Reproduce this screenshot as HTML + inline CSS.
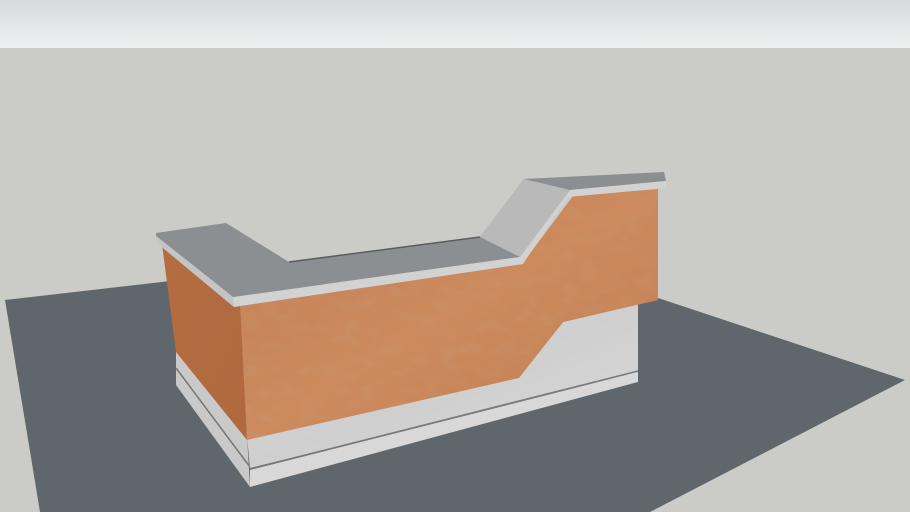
<!DOCTYPE html>
<html><head><meta charset="utf-8"><style>
html,body{margin:0;padding:0;width:910px;height:512px;overflow:hidden;background:#cbcbc8}
svg{display:block}
</style></head><body>
<svg width="910" height="512" viewBox="0 0 910 512" xmlns="http://www.w3.org/2000/svg">
<defs>
<linearGradient id="sky" x1="0" y1="0" x2="0" y2="1">
<stop offset="0" stop-color="#d6dadd"/><stop offset="1" stop-color="#eff0f0"/></linearGradient>
<linearGradient id="wood" x1="0" y1="0" x2="1" y2="1">
<stop offset="0" stop-color="#c27e53"/><stop offset="0.5" stop-color="#cc8a5d"/><stop offset="1" stop-color="#c27d51"/></linearGradient>
<linearGradient id="woodside" x1="0" y1="0" x2="1" y2="1">
<stop offset="0" stop-color="#b46c41"/><stop offset="1" stop-color="#b0693e"/></linearGradient>
<linearGradient id="conc" x1="0" y1="0" x2="1" y2="1">
<stop offset="0" stop-color="#d9d9d9"/><stop offset="0.5" stop-color="#cfcfcf"/><stop offset="1" stop-color="#dadada"/></linearGradient>
<filter id="grain" x="0" y="0" width="1" height="1">
<feTurbulence type="fractalNoise" baseFrequency="0.05 0.09" numOctaves="2" seed="3"/>
<feColorMatrix values="0 0 0 0 0.6  0 0 0 0 0.38  0 0 0 0 0.25  0 0 0 0.9 -0.35"/>
<feComposite in2="SourceGraphic" operator="in"/>
</filter>
</defs>
<rect x="0" y="0" width="910" height="48" fill="url(#sky)"/>
<rect x="0" y="48" width="910" height="464" fill="#cbcbc8"/>
<polygon points="5,300 170,281 640,292 905,380 650,512 40,512" fill="#5f676d"/>
<polygon points="176,345 247,435 250,487 176,385" fill="#c9c9c9"/>
<line x1="176" y1="368" x2="250" y2="467" stroke="#777" stroke-width="1.5"/>
<polygon points="247,436 519,377 563,322 638,304 638,372 250,468" fill="url(#conc)"/>
<polygon points="250,470 638,372 638,382 250,487" fill="#d8d8d8"/>
<line x1="250" y1="469" x2="638" y2="371" stroke="#7a7a7a" stroke-width="1.5"/>
<polygon points="162,244 240,305 247,440 176,352" fill="url(#woodside)"/>
<polygon points="240,306 522,264 573,196 658,189 658,300 563,322 519,378 247,440" fill="url(#wood)"/>
<polygon points="240,306 522,264 573,196 658,189 658,300 563,322 519,378 247,440" fill="#c27e53" filter="url(#grain)" opacity="0.45"/>
<polygon points="156,233 226,223 289,262 480,237 524,179 664,172 666,181 570,190 520,257 233,297 156,236" fill="#8b8f91"/>
<polygon points="480,237 524,179 570,190 520,257" fill="#b9b9b9"/>
<line x1="289" y1="262" x2="480" y2="237" stroke="#5a5d60" stroke-width="1.5"/>
<polygon points="156,236 233,297 520,257 570,190 666,181 666,188 568,197 523,264 234,307 157,243" fill="#d2d2d2"/>
<polygon points="156,236 233,297 234,307 157,243" fill="#c4c4c4"/>
</svg>
</body></html>
